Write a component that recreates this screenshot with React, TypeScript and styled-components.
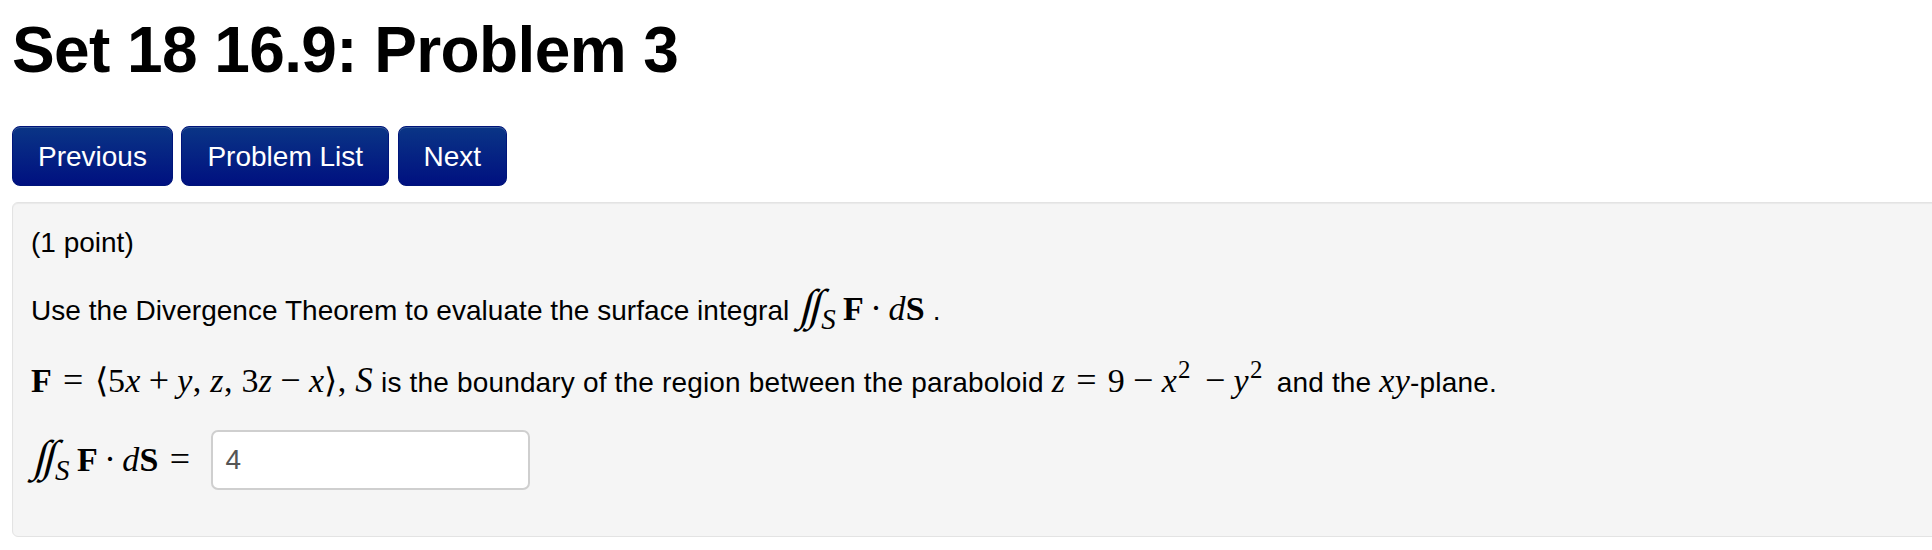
import styled, { createGlobalStyle } from "styled-components";

const GlobalStyle = createGlobalStyle`
  html, body {
    margin: 0;
    padding: 0;
    background: #fff;
    overflow: hidden;
  }
  body {
    font-family: "Liberation Sans", Arial, sans-serif;
    color: #000;
  }
`;

const Page = styled.div`
  width: 1932px;
  height: 550px;
  overflow: hidden;
  padding: 15px 0 0 12px;
  box-sizing: border-box;
`;

const Title = styled.h1`
  margin: 0 0 41px;
  font-size: 64px;
  line-height: 70px;
  font-weight: 700;
  letter-spacing: -0.6px;
`;

const Nav = styled.div`
  display: flex;
  gap: 8.5px;
  margin: 0 0 16px;
`;

const NavButton = styled.a`
  display: block;
  height: 60px;
  padding: 0 25px;
  box-sizing: border-box;
  border-radius: 8px;
  border: 1px solid #00157a;
  background: linear-gradient(#0a3586, #001080);
  box-shadow: inset 0 1px 0 rgba(255, 255, 255, 0.18);
  color: #fff;
  font-size: 28px;
  line-height: 60px;
  letter-spacing: 0;
`;

const Panel = styled.div`
  width: 1960px;
  height: 335px;
  box-sizing: border-box;
  padding: 22px 18px;
  background: #f5f5f5;
  border: 1px solid #e3e3e3;
  border-radius: 6px;
  box-shadow: inset 0 1px 1px rgba(0, 0, 0, 0.05);
  font-size: 28px;
`;

const Line = styled.p<{ $tracking?: number }>`
  margin: 0 0 36px;
  height: 36px;
  line-height: 36px;
  white-space: nowrap;
  letter-spacing: ${(p) => p.$tracking ?? 0}px;
`;

const PointsLine = styled(Line)`
  margin-bottom: 30px;
`;

const AnswerLine = styled(Line)`
  display: flex;
  align-items: center;
  height: 60px;
  margin-top: -5px;
`;

const Math = styled.span`
  font-family: "Liberation Serif", "Times New Roman", serif;
  font-size: 34px;
  letter-spacing: 0.3px;
`;

const I = styled.i`
  font-style: italic;
`;

const B = styled.b`
  font-weight: 700;
`;

const Op = styled.span<{ $wide?: boolean }>`
  font-size: 36px;
  line-height: 0;
  padding: 0 ${(p) => (p.$wide ? 11 : 8)}px;
`;

const Dot = styled(Op)`
  padding: 0 6px;
`;

const Sup = styled.sup`
  font-size: 25px;
  line-height: 0;
  vertical-align: 14px;
  margin: 0 6px 0 1px;
`;

const Sub = styled.sub`
  font-size: 29px;
  font-style: italic;
  line-height: 0;
  vertical-align: -9px;
  margin: 0 7px 0 -2px;
`;

const Integral = styled.span`
  display: inline-block;
  font-size: 44px;
  line-height: 0;
  letter-spacing: -3px;
  transform: skewX(-14deg);
  margin: 0 3px 0 5px;
`;

const Script = styled.span`
  font-style: italic;
  font-size: 35px;
  line-height: 0;
`;

const AnswerInput = styled.input`
  width: 319px;
  height: 60px;
  margin-left: 10px;
  box-sizing: border-box;
  padding: 0 12px;
  background: #fff;
  border: 2px solid #cfcfcf;
  border-radius: 7px;
  color: #555;
  font-family: "Liberation Sans", Arial, sans-serif;
  font-size: 28px;
`;

const SurfaceIntegral = () => (
  <Math>
    <Integral>∫∫</Integral>
    <Sub>S</Sub>
    <B>F</B>
    <Dot>·</Dot>
    <I>d</I>
    <B>S</B>
  </Math>
);

export default function App() {
  return (
    <>
      <GlobalStyle />
      <Page>
        <Title>Set 18 16.9: Problem 3</Title>
        <Nav>
          <NavButton>Previous</NavButton>
          <NavButton>Problem List</NavButton>
          <NavButton>Next</NavButton>
        </Nav>
        <Panel>
          <PointsLine>(1 point)</PointsLine>
          <Line $tracking={0.04}>
            Use the Divergence Theorem to evaluate the surface integral{" "}
            <SurfaceIntegral /> .
          </Line>
          <Line $tracking={0.17}>
            <Math>
              <B>F</B>
              <Op $wide>=</Op>⟨5<I>x</I>
              <Op>+</Op>
              <I>y</I>, <I>z</I>, 3<I>z</I>
              <Op>−</Op>
              <I>x</I>⟩, <Script>S</Script>
            </Math>{" "}
            is the boundary of the region between the paraboloid{" "}
            <Math>
              <I>z</I>
              <Op $wide>=</Op>9<Op>−</Op>
              <I>x</I>
              <Sup>2</Sup>
              <Op>−</Op>
              <I>y</I>
              <Sup>2</Sup>
            </Math>{" "}
            and the{" "}
            <Math>
              <I>xy</I>
            </Math>
            -plane.
          </Line>
          <AnswerLine>
            <SurfaceIntegral />
            <Math>
              <Op $wide>=</Op>
            </Math>
            <AnswerInput defaultValue="4" />
          </AnswerLine>
        </Panel>
      </Page>
    </>
  );
}
